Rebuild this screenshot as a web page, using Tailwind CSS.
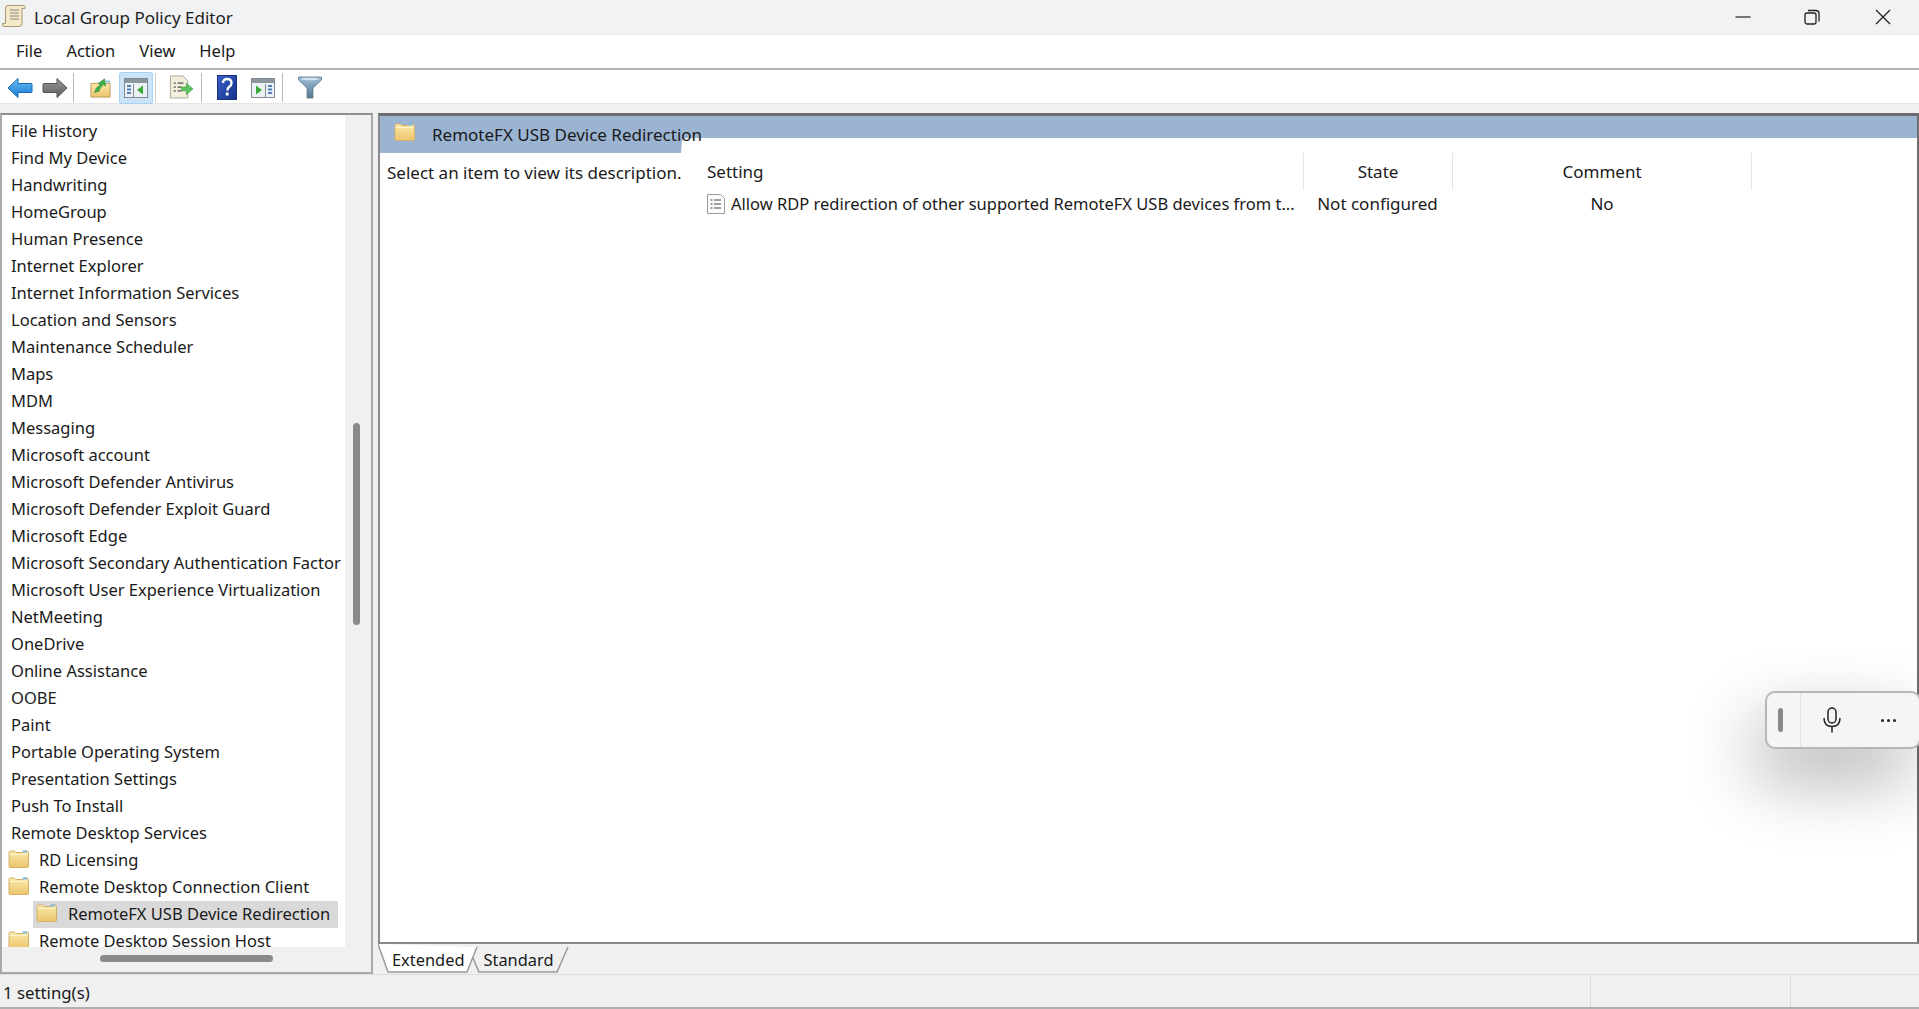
<!DOCTYPE html>
<html lang="en">

<head>
    <meta charset="UTF-8">
    <script src="https://cdn.jsdelivr.net/npm/@tailwindcss/browser@4"></script>
    <title>Local Group Policy Editor</title>
</head>

<body class="bg-[#f0f0f0] text-[#1a1a1a] font-['Noto_Sans',sans-serif] text-[17px] leading-none">
    <!-- shared icons -->
    <svg class="absolute w-0 h-0">
        <defs>
            <linearGradient id="fold" x1="0" y1="0" x2="0" y2="1">
                <stop offset="0" stop-color="#fbe9a8" />
                <stop offset="1" stop-color="#ecc56e" />
            </linearGradient>
            <linearGradient id="backg" x1="0" y1="0" x2="0" y2="1">
                <stop offset="0" stop-color="#6cc0f5" />
                <stop offset="1" stop-color="#1478cf" />
            </linearGradient>
            <linearGradient id="fwdg" x1="0" y1="0" x2="0" y2="1">
                <stop offset="0" stop-color="#9a9a9a" />
                <stop offset="1" stop-color="#5e5e5e" />
            </linearGradient>
            <linearGradient id="helpg" x1="0" y1="0" x2="1" y2="1">
                <stop offset="0" stop-color="#3a63c8" />
                <stop offset="1" stop-color="#152f8c" />
            </linearGradient>
            <linearGradient id="filt" x1="0" y1="0" x2="0" y2="1">
                <stop offset="0" stop-color="#9fc0d6" />
                <stop offset="1" stop-color="#56788e" />
            </linearGradient>
            <symbol id="folder" viewBox="0 0 21 20">
                <path d="M1 3.500 q0-1.500 1.500-1.500 h4 l1.500 1.500 h7 l1-1.500 h3 q1.500 0 1.500 1.500 v14 q0 1-1 1 h-17.500 q-1 0-1-1z" fill="url(#fold)" stroke="#d3b06a" />
                <rect x="14.500" y="1.500" width="4.500" height="2" fill="#7fb9e8" />
                <path d="M1.500 5.500 h18" stroke="#fff3c8" />
            </symbol>
        </defs>
    </svg>

    <div class="w-[1919px] h-[1009px] flex flex-col overflow-hidden relative">
        <!-- title bar -->
        <div class="h-[35px] bg-[#f1f2f4] border-b border-[#e8e8e8] flex items-center shrink-0">
            <svg class="w-[24px] h-[24px] ml-[2px] mt-[-2px] shrink-0" viewBox="0 0 24 24">
                <path d="M6 1.500 h15 q2.500 0 2 3 h-3 v15 q0 3-3 3 h-15 q-2 0-1.500-3 h3 v-15 q0-3 2.500-3z" fill="#f3e8c8" stroke="#a89a6c" />
                <path d="M8 6 h9 M8 9 h9 M8 12 h9 M8 15 h9" stroke="#8a8a80" />
            </svg>
            <span class="ml-[8px] text-[#1c1c1c]">Local Group Policy Editor</span>
            <div class="ml-auto flex items-center">
                <svg class="w-[16px] h-[16px] mr-[53px]" viewBox="0 0 16 16"><path d="M0.500 8 h15" stroke="#222" stroke-width="1.200" /></svg>
                <svg class="w-[16px] h-[16px] mr-[55px]" viewBox="0 0 16 16" fill="none" stroke="#222" stroke-width="1.300"><rect x="1" y="4" width="11" height="11" rx="2" /><path d="M4 1.500 h8 q3 0 3 3 v8" /></svg>
                <svg class="w-[16px] h-[16px] mr-[28px]" viewBox="0 0 16 16"><path d="M1 1 L15 15 M15 1 L1 15" stroke="#222" stroke-width="1.300" /></svg>
            </div>
        </div>

        <!-- menu bar -->
        <div class="h-[35px] bg-white border-b-2 border-[#b4b4b4] flex items-center gap-[24px] pl-[16px] shrink-0 text-[16.5px]">
            <span>File</span>
            <span>Action</span>
            <span>View</span>
            <span>Help</span>
        </div>

        <!-- toolbar -->
        <div class="h-[34px] bg-white border-b border-[#e6e6e6] flex items-center shrink-0 pt-[2px]">
            <svg class="w-[26px] h-[22px] ml-[7px]" viewBox="0 0 26 22"><path d="M1 11 L11 1.500 V6.500 H24 q1 0 1 1 V14.500 q0 1-1 1 H11 V20.500z" fill="url(#backg)" stroke="#1a6cb8" /></svg>
            <svg class="w-[26px] h-[22px] ml-[9px]" viewBox="0 0 26 22"><path d="M25 11 L15 1.500 V6.500 H2 q-1 0-1 1 V14.500 q0 1 1 1 H15 V20.500z" fill="url(#fwdg)" stroke="#555" /></svg>
            <div class="w-px h-[29px] bg-[#b8b8b8] ml-[5px]"></div>
            <svg class="w-[21px] h-[23px] ml-[16px]" viewBox="0 0 23 23">
                <path d="M1 7 h21 v15 h-21z" fill="url(#fold)" stroke="#b8995a" />
                <path d="M5 17 q1-6 6-8 l-2-2 7-5 1 8-2-1.500 q-4 2-5 7z" fill="#3fb04a" stroke="#23862e" stroke-width="0.600" />
                <rect x="17" y="4" width="5" height="2" fill="#7fb9e8" />
            </svg>
            <div class="w-[34px] h-[32px] ml-[8px] bg-[#cce4f7] border border-[#a6d3f5] rounded-[2px] flex items-center justify-center">
                <svg class="w-[24px] h-[20px]" viewBox="0 0 24 20">
                    <rect x="0.500" y="0.500" width="23" height="19" fill="#eef1f4" stroke="#7f8a94" />
                    <rect x="1" y="1" width="22" height="4" fill="#8b969f" />
                    <path d="M9.500 6 v13" stroke="#7f8a94" />
                    <path d="M3 8 h4 M3 11.500 h4 M3 15 h4" stroke="#4f82bb" stroke-width="2" />
                    <path d="M19 7.500 v9 l-6-4.500z" fill="#36a83c" />
                </svg>
            </div>
            <div class="w-px h-[29px] bg-[#d0d0d0] ml-[2px]"></div>
            <svg class="w-[24px] h-[25px] ml-[13px]" viewBox="0 0 25 25">
                <path d="M1.500 0.500 h13 l5 5 v18 h-18z" fill="#f2eedd" stroke="#a9a698" />
                <path d="M5 8 h2 M9 8 h6 M5 12 h2 M9 12 h4 M5 16 h2 M9 16 h4" stroke="#4a4a4a" stroke-width="1.300" />
                <path d="M13 12 h5 v-4 l7 6-7 6 v-4 h-5z" fill="#5cc25c" stroke="#3c9c3e" stroke-width="0.600" />
            </svg>
            <div class="w-px h-[29px] bg-[#b8b8b8] ml-[8px]"></div>
            <svg class="w-[20px] h-[25px] ml-[15px]" viewBox="0 0 20 25">
                <rect x="0.500" y="0.500" width="19" height="24" fill="url(#helpg)" stroke="#1a2f7a" />
                <path d="M6 8 q0-4 4.200-4 q4.300 0 4.300 4 q0 2.500-2.500 4 q-1.500 1-1.500 3.500" fill="none" stroke="#fff" stroke-width="2.400" />
                <rect x="8.800" y="17.500" width="2.800" height="3" fill="#fff" />
            </svg>
            <svg class="w-[24px] h-[20px] ml-[14px]" viewBox="0 0 24 20">
                <rect x="0.500" y="0.500" width="23" height="19" fill="#eef1f4" stroke="#7f8a94" />
                <rect x="1" y="1" width="22" height="4" fill="#8b969f" />
                <path d="M14.500 6 v13" stroke="#7f8a94" />
                <path d="M17 8 h4 M17 11.500 h4 M17 15 h4" stroke="#4f82bb" stroke-width="2" />
                <path d="M5 7.500 v9 l6-4.500z" fill="#36a83c" />
            </svg>
            <div class="w-px h-[29px] bg-[#b8b8b8] ml-[7px]"></div>
            <svg class="w-[24px] h-[23px] ml-[15px]" viewBox="0 0 24 23">
                <path d="M0.500 1 h23 v3 l-8.500 8 v10 h-6 v-10 l-8.500-8z" fill="url(#filt)" stroke="#60798a" stroke-width="0.800" />
                <ellipse cx="12" cy="3" rx="9" ry="1.300" fill="#d4e3ec" />
            </svg>
        </div>

        <!-- panels -->
        <div class="flex h-[870px] pt-[9px] shrink-0">
            <!-- tree -->
            <div class="w-[373px] h-[861px] bg-white border-2 border-[#a9a9a9] border-t-[#8f8f8f] flex flex-col shrink-0">
                <div class="flex flex-1 min-h-0">
                    <div class="w-[343px] h-[832px] overflow-hidden pt-[3px] shrink-0 whitespace-nowrap text-[16.5px]">
                        <div class="h-[27px] flex items-center pl-[9px]">File History</div>
                        <div class="h-[27px] flex items-center pl-[9px]">Find My Device</div>
                        <div class="h-[27px] flex items-center pl-[9px]">Handwriting</div>
                        <div class="h-[27px] flex items-center pl-[9px]">HomeGroup</div>
                        <div class="h-[27px] flex items-center pl-[9px]">Human Presence</div>
                        <div class="h-[27px] flex items-center pl-[9px]">Internet Explorer</div>
                        <div class="h-[27px] flex items-center pl-[9px]">Internet Information Services</div>
                        <div class="h-[27px] flex items-center pl-[9px]">Location and Sensors</div>
                        <div class="h-[27px] flex items-center pl-[9px]">Maintenance Scheduler</div>
                        <div class="h-[27px] flex items-center pl-[9px]">Maps</div>
                        <div class="h-[27px] flex items-center pl-[9px]">MDM</div>
                        <div class="h-[27px] flex items-center pl-[9px]">Messaging</div>
                        <div class="h-[27px] flex items-center pl-[9px]">Microsoft account</div>
                        <div class="h-[27px] flex items-center pl-[9px]">Microsoft Defender Antivirus</div>
                        <div class="h-[27px] flex items-center pl-[9px]">Microsoft Defender Exploit Guard</div>
                        <div class="h-[27px] flex items-center pl-[9px]">Microsoft Edge</div>
                        <div class="h-[27px] flex items-center pl-[9px]">Microsoft Secondary Authentication Factor</div>
                        <div class="h-[27px] flex items-center pl-[9px]">Microsoft User Experience Virtualization</div>
                        <div class="h-[27px] flex items-center pl-[9px]">NetMeeting</div>
                        <div class="h-[27px] flex items-center pl-[9px]">OneDrive</div>
                        <div class="h-[27px] flex items-center pl-[9px]">Online Assistance</div>
                        <div class="h-[27px] flex items-center pl-[9px]">OOBE</div>
                        <div class="h-[27px] flex items-center pl-[9px]">Paint</div>
                        <div class="h-[27px] flex items-center pl-[9px]">Portable Operating System</div>
                        <div class="h-[27px] flex items-center pl-[9px]">Presentation Settings</div>
                        <div class="h-[27px] flex items-center pl-[9px]">Push To Install</div>
                        <div class="h-[27px] flex items-center pl-[9px]">Remote Desktop Services</div>
                        <div class="h-[27px] flex items-center pl-[6px]"><svg class="w-[21px] h-[20px] mr-[10px] mt-[-3px] shrink-0"><use href="#folder" /></svg>RD Licensing</div>
                        <div class="h-[27px] flex items-center pl-[6px]"><svg class="w-[21px] h-[20px] mr-[10px] mt-[-3px] shrink-0"><use href="#folder" /></svg>Remote Desktop Connection Client</div>
                        <div class="h-[27px] flex items-center ml-[31px] w-[305px] pl-[3px] bg-[#d9d9d9]"><svg class="w-[21px] h-[20px] mr-[11px] mt-[-3px] shrink-0"><use href="#folder" /></svg>RemoteFX USB Device Redirection</div>
                        <div class="h-[27px] flex items-center pl-[6px]"><svg class="w-[21px] h-[20px] mr-[10px] mt-[-3px] shrink-0"><use href="#folder" /></svg>Remote Desktop Session Host</div>
                    </div>
                    <!-- vertical scrollbar -->
                    <div class="flex-1 bg-[#f0f0f0] pt-[308px] pl-[8px]">
                        <div class="w-[7px] h-[202px] rounded-full bg-[#8a8a8a]"></div>
                    </div>
                </div>
                <!-- horizontal scrollbar -->
                <div class="h-[25px] bg-[#f0f0f0] pt-[8px] pl-[98px]">
                    <div class="w-[173px] h-[7px] rounded-full bg-[#8a8a8a]"></div>
                </div>
            </div>

            <!-- details -->
            <div class="flex-1 ml-[5px] min-w-0 flex flex-col">
                <div class="h-[831px] bg-white border-2 border-[#8a8a8a] border-t-[3px] border-t-[#6e6e6e] border-r-[#6e6e6e] flex flex-col shrink-0">
                    <div class="h-[37px] relative flex items-start pt-[6px] pl-[14px] shrink-0">
                        <div class="absolute inset-0 bg-[#9ab4d1] [clip-path:polygon(0_0,100%_0,100%_22px,305px_22px,302px_25px,301px_37px,0_37px)]"></div>
                        <svg class="relative w-[21px] h-[20px] mr-[17px] shrink-0"><use href="#folder" /></svg>
                        <span class="relative mt-[4px] whitespace-nowrap">RemoteFX USB Device Redirection</span>
                    </div>
                    <div class="flex flex-1">
                        <div class="w-[327px] pl-[7px] pt-[11px] whitespace-nowrap shrink-0">Select an item to view its description.</div>
                        <div class="flex-1 flex flex-col">
                            <div class="h-[37px] flex items-center">
                                <div class="w-[596px]">Setting</div>
                                <div class="w-[149px] h-full flex items-center justify-center border-l border-[#e5e5e5]">State</div>
                                <div class="w-[300px] h-full flex items-center justify-center border-l border-r border-[#e5e5e5]">Comment</div>
                            </div>
                            <div class="h-[27px] flex items-center">
                                <div class="w-[596px] flex items-center">
                                    <svg class="w-[18px] h-[20px] mr-[6px] shrink-0" viewBox="0 0 18 20">
                                        <path d="M0.500 0.500 h13 l4 4 v15 h-17z" fill="#fbfbfb" stroke="#9c9c9c" />
                                        <path d="M3.500 6 h2 M7 6 h7 M3.500 10 h2 M7 10 h7 M3.500 14 h2 M7 14 h7" stroke="#444" stroke-width="1.200" />
                                    </svg>
                                    <span class="whitespace-nowrap text-[16.5px] mt-[1px]">Allow RDP redirection of other supported RemoteFX USB devices from t...</span>
                                </div>
                                <div class="w-[149px] text-center whitespace-nowrap">Not configured</div>
                                <div class="w-[300px] text-center">No</div>
                            </div>
                        </div>
                    </div>
                </div>

                <!-- tabs -->
                <div class="h-[30px] relative flex items-center pl-[14px] pt-[2px] gap-[19px] text-[16.4px]">
                    <svg class="absolute left-0 top-0" width="200" height="30" viewBox="0 0 200 30" fill="none">
                        <path d="M0 0 L10 28 H89 L99 3" fill="#fff" />
                        <path d="M0 0 L10 28 H89 L99 3" stroke="#9a9a9a" stroke-width="1.500" />
                        <path d="M95 14 L101 28 H179 L190 3" stroke="#9a9a9a" stroke-width="1.500" />
                    </svg>
                    <span class="relative">Extended</span>
                    <span class="relative">Standard</span>
                </div>
            </div>
        </div>

        <!-- status bar -->
        <div class="flex-1 bg-[#f0f0f0] border-t border-[#dcdcdc] border-b-2 border-b-[#b0b0b0] flex text-[16.8px]">
            <div class="w-[1590px] flex items-center pl-[3px] pt-[4px]">1 setting(s)</div>
            <div class="w-[200px] border-l border-[#dddddd]"></div>
            <div class="flex-1 border-l border-[#dddddd]"></div>
        </div>

        <!-- voice typing widget -->
        <div class="absolute left-[1765px] top-[691px] w-[156px] h-[58px] bg-[#f5f5f5] border-2 border-[#b6b6b6] rounded-[10px] flex items-center shadow-[-10px_30px_70px_rgba(0,0,0,0.32)]">
            <div class="w-[34px] h-full border-r border-[#e2e2e2] flex items-center pl-[11px]">
                <div class="w-[5px] h-[24px] rounded-full bg-[#8a8a8a]"></div>
            </div>
            <svg class="w-[20px] h-[26px] ml-[21px]" viewBox="0 0 20 26" fill="none" stroke="#222" stroke-width="1.500">
                <rect x="6" y="1" width="8" height="15" rx="4" />
                <path d="M2 11 q0 8.500 8 8.500 q8 0 8-8.500 M10 19.500 v6" />
            </svg>
            <div class="flex gap-[3px] ml-[39px]">
                <div class="w-[3px] h-[3px] rounded-full bg-[#222]"></div>
                <div class="w-[3px] h-[3px] rounded-full bg-[#222]"></div>
                <div class="w-[3px] h-[3px] rounded-full bg-[#222]"></div>
            </div>
        </div>
    </div>
</body>

</html>
